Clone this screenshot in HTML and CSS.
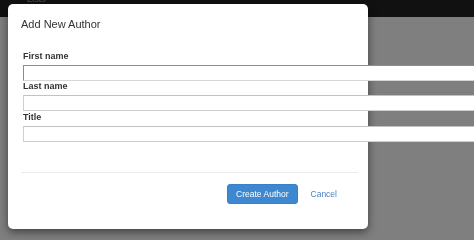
FILE: index.html
```html
<!DOCTYPE html>
<html>
<head>
<meta charset="utf-8">
<link rel="stylesheet" href="styles.css">
</head>
<body>
<div class="navbar"><span class="brand">Lists</span></div>
<div class="page"></div>
<div class="backdrop"></div>
<div class="modal">
  <div class="modal-header">
    <h4 class="modal-title">Add New Author</h4>
  </div>
  <form class="modal-body">
    <div class="group">
      <label class="label">First name</label>
      <input class="input input-focus" type="text">
    </div>
    <div class="group">
      <label class="label">Last name</label>
      <input class="input" type="text">
    </div>
    <div class="group">
      <label class="label">Title</label>
      <input class="input" type="text">
    </div>
  </form>
  <div class="modal-footer">
    <button class="btn-primary" type="button">Create Author</button>
    <a class="btn-link" href="#">Cancel</a>
  </div>
</div>
</body>
</html>
```
FILE: styles.css
```css
html, body {
  margin: 0;
  padding: 0;
  overflow: hidden;
  width: 474px;
  height: 236px;
  background: #ffffff;
  font-family: "Liberation Sans", Arial, sans-serif;
}

.navbar {
  height: 17px;
  background: #222222;
  overflow: hidden;
}

.brand {
  display: block;
  margin: -6px 0 0 27px;
  font-size: 9px;
  line-height: 10px;
  color: #9a9a9a;
}

.backdrop {
  position: fixed;
  inset: 0;
  background: rgba(0, 0, 0, 0.5);
}

.modal {
  position: absolute;
  left: 8px;
  top: 4px;
  width: 360px;
  height: 225px;
  background: #ffffff;
  border-radius: 5px;
  box-shadow: 0 3px 9px rgba(0, 0, 0, 0.5);
  box-sizing: border-box;
}

.modal-header {
  padding: 14px 13px 0 13px;
}

.modal-title {
  margin: 0;
  font-size: 11px;
  line-height: 12.6px;
  font-weight: normal;
  color: #333333;
}

.modal-body {
  display: flex;
  flex-direction: column;
  gap: 0.5px;
  margin: 0;
  padding: 20px 0 0 15px;
  height: 120px;
  box-sizing: border-box;
}

.group {
  display: flex;
  flex-direction: column;
  align-items: flex-start;
}

.label {
  font-size: 9px;
  line-height: 11px;
  font-weight: bold;
  color: #333333;
  margin-bottom: 3px;
}

.input {
  width: 470px;
  height: 16px;
  margin: 0;
  padding: 0 4px;
  box-sizing: border-box;
  border: 1px solid #cfcfcf;
  border-top-color: #c2c2c2;
  border-radius: 0;
  background: #ffffff;
  outline: none;
}

.input-focus {
  border-color: #8c8c8c #d6d6d6 #d6d6d6 #8c8c8c;
}

.modal-footer {
  display: flex;
  justify-content: flex-end;
  align-items: center;
  gap: 13px;
  margin: 21px 10px 0 13px;
  padding: 11px 21px 0 0;
  border-top: 1px solid #ececec;
}

.btn-primary {
  height: 20px;
  padding: 0 8px;
  border: 1px solid #3a80c4;
  border-radius: 3px;
  background: #3d88d0;
  color: #ffffff;
  font-family: "Liberation Sans", Arial, sans-serif;
  font-size: 8.5px;
}

.btn-link {
  color: #4a82c6;
  text-decoration: none;
  font-size: 8.5px;
}
```
